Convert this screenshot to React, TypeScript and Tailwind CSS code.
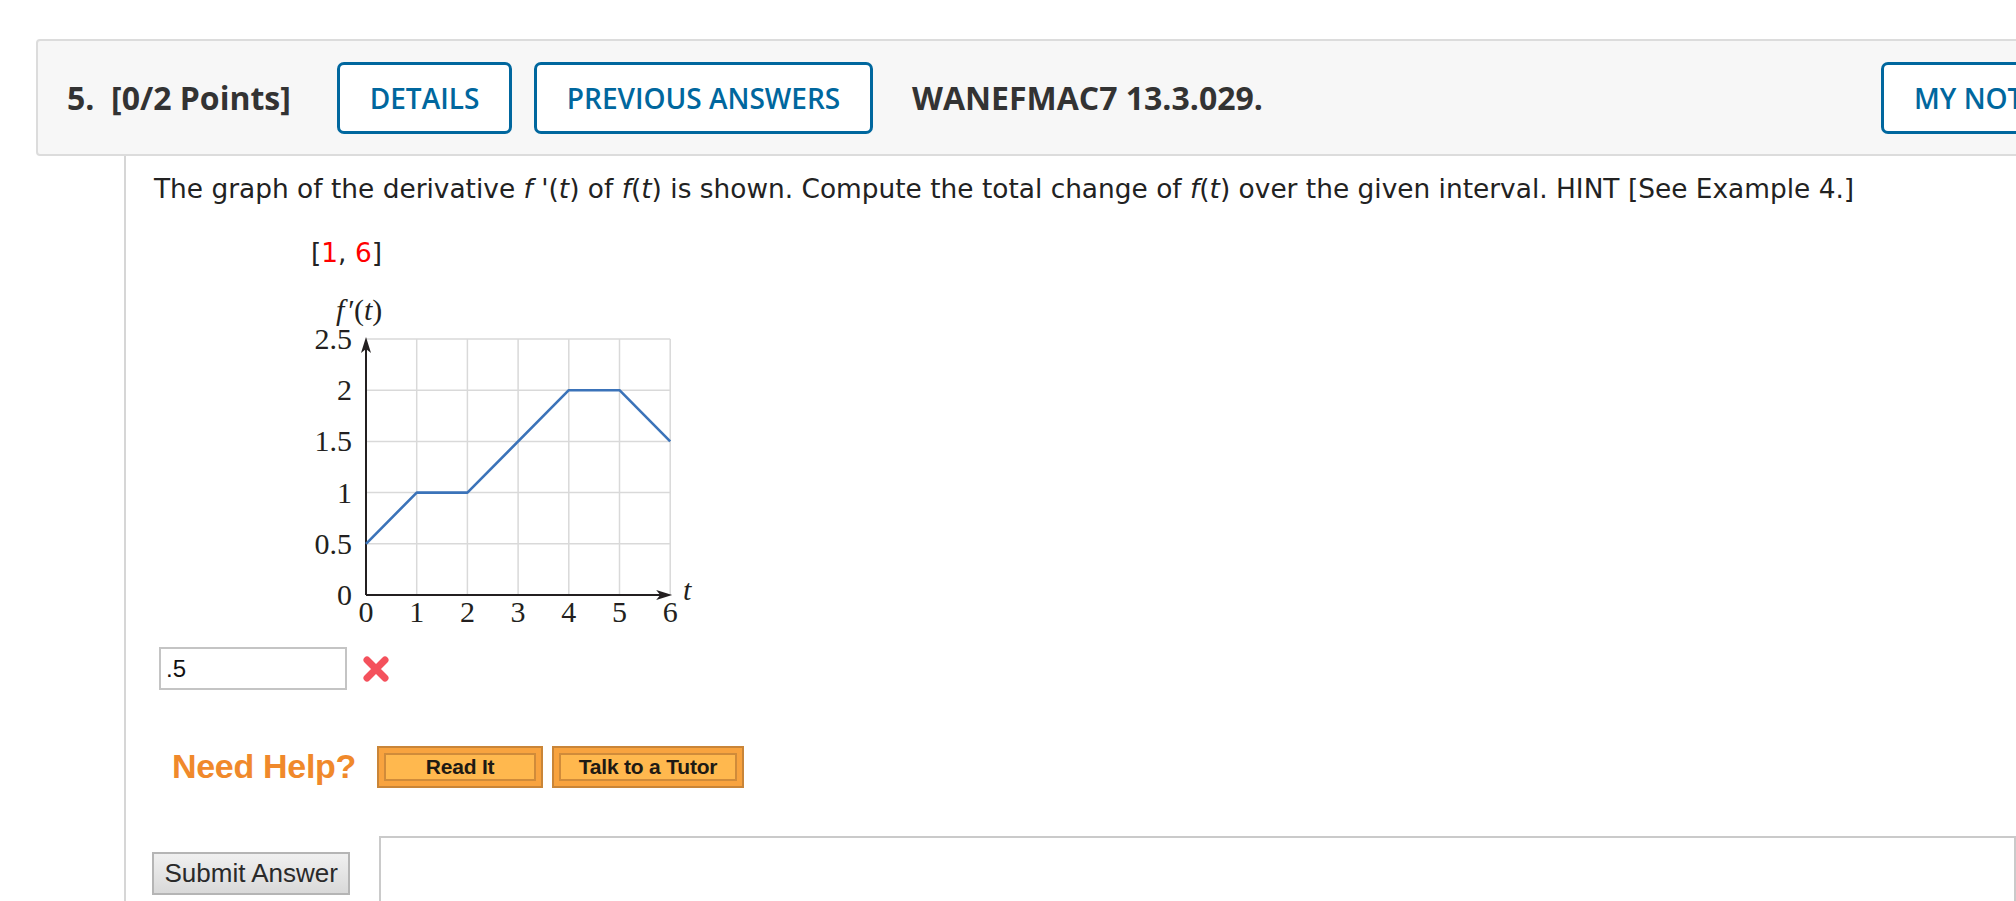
import React from "react";

const UX = 50.7;
const UY = 102.4;
const X0 = 66;
const Y0 = 303;

const px = (t: number) => X0 + t * UX;
const py = (v: number) => Y0 - v * UY;

const CURVE: [number, number][] = [
  [0, 0.5],
  [1, 1],
  [2, 1],
  [4, 2],
  [5, 2],
  [6, 1.5],
];

function DerivativeGraph() {
  const yTicks = [0.5, 1, 1.5, 2, 2.5];
  const yLabels = ["0", "0.5", "1", "1.5", "2", "2.5"];
  const top = py(2.5);
  const right = px(6);
  return (
    <svg width="410" height="336" viewBox="0 0 410 336" className="block">
      {/* grid */}
      {[1, 2, 3, 4, 5, 6].map((t) => (
        <line key={`v${t}`} x1={px(t)} y1={Y0} x2={px(t)} y2={top} stroke="#d9d9d9" strokeWidth="1.5" />
      ))}
      {yTicks.map((v) => (
        <line key={`h${v}`} x1={X0} y1={py(v)} x2={right} y2={py(v)} stroke="#d9d9d9" strokeWidth="1.5" />
      ))}

      {/* axes */}
      <line x1={X0} y1={Y0} x2={X0} y2={top + 10} stroke="#231f20" strokeWidth="2" />
      <polygon points={`${X0},${top - 2} ${X0 - 5},${top + 14} ${X0},${top + 10} ${X0 + 5},${top + 14}`} fill="#231f20" />
      <line x1={X0} y1={Y0} x2={right - 8} y2={Y0} stroke="#231f20" strokeWidth="2" />
      <polygon points={`${right + 2},${Y0} ${right - 14},${Y0 - 5} ${right - 10},${Y0} ${right - 14},${Y0 + 5}`} fill="#231f20" />

      {/* curve */}
      <polyline
        points={CURVE.map(([t, v]) => `${px(t)},${py(v)}`).join(" ")}
        fill="none"
        stroke="#3b73b9"
        strokeWidth="2.6"
        strokeLinejoin="round"
      />

      {/* labels */}
      <g fontFamily="'Liberation Serif', 'Times New Roman', serif" fontSize="30" fill="#231f20">
        {yLabels.map((l, i) => (
          <text key={l} x="52" y={py(i * 0.5) + 10} textAnchor="end">
            {l}
          </text>
        ))}
        {[0, 1, 2, 3, 4, 5, 6].map((t) => (
          <text key={`x${t}`} x={px(t)} y="330" textAnchor="middle">
            {t}
          </text>
        ))}
        <text x="36" y="28">
          <tspan fontStyle="italic">f</tspan>
          <tspan dx="4">′</tspan>
          <tspan dx="-1">(</tspan>
          <tspan fontStyle="italic">t</tspan>
          <tspan>)</tspan>
        </text>
        <text x="383" y="308" fontStyle="italic">
          t
        </text>
      </g>
    </svg>
  );
}

function OutlineButton({ label, width }: { label: string; width: string }) {
  return (
    <div
      className={`h-[72px] ${width} shrink-0 flex items-center justify-center border-[3px] border-[#00679e] rounded-[7px] bg-white text-[28px] font-semibold text-[#00679e] whitespace-nowrap overflow-hidden`}
    >
      {label}
    </div>
  );
}

function OrangeButton({ label, width }: { label: string; width: string }) {
  return (
    <div className={`h-[42px] ${width} p-[2px] bg-[#c98538]`}>
      <div className="h-full w-full bg-[#f8a33f] p-[5px]">
        <div className="h-full w-full border-2 border-[#d08b3a] bg-[#ffb84e] flex items-center justify-center text-[21px] font-bold text-[#1e1a14] leading-none tracking-[-0.2px]">
          {label}
        </div>
      </div>
    </div>
  );
}

const VERDANA = { fontFamily: "'DejaVu Sans', Verdana, sans-serif" };
const ARIAL = { fontFamily: "'Liberation Sans', Arial, sans-serif" };

export default function App() {
  return (
    <div className="w-full h-[901px] bg-white overflow-hidden">
      {/* question header */}
      <div className="pt-[39px] pl-[36px]">
        <div
          className="w-[2100px] h-[117px] flex items-center pl-[29px] border-2 border-[#dcdcdc] rounded-[4px] bg-[#f7f7f7] text-[#333]"
          style={{ fontFamily: "'Open Sans', sans-serif" }}
        >
          <div className="w-[270px] shrink-0 text-[32px] font-bold whitespace-nowrap">5.&nbsp; [0/2 Points]</div>
          <OutlineButton label="DETAILS" width="w-[175px]" />
          <div className="w-[22px] shrink-0" />
          <OutlineButton label="PREVIOUS ANSWERS" width="w-[339px]" />
          <div className="w-[1008px] shrink-0 pl-[39px] text-[32px] font-bold whitespace-nowrap">WANEFMAC7 13.3.029.</div>
          <div className="h-[72px] w-[250px] shrink-0 flex items-center pl-[30px] border-[3px] border-[#00679e] rounded-[7px] bg-white text-[28px] font-semibold text-[#00679e] whitespace-nowrap">
            MY NOTES
          </div>
        </div>
      </div>

      {/* question body */}
      <div className="ml-[124px] border-l-2 border-[#d6d6d6] h-[760px] pl-[28px]">
        <p className="pt-[15px] text-[26.4px] leading-[36px] text-[#222] whitespace-nowrap" style={VERDANA}>
          The graph of the derivative <i>f</i> '(<i>t</i>) of <i>f</i>(<i>t</i>) is shown. Compute the total change of{" "}
          <i>f</i>(<i>t</i>) over the given interval. HINT [See Example 4.]
        </p>
        <p className="mt-[28px] ml-[157px] text-[26.4px] leading-[36px] text-[#222]" style={VERDANA}>
          [<span className="text-[#ff0000]">1</span>, <span className="text-[#ff0000]">6</span>]
        </p>

        <div className="mt-[21px] ml-[146px]">
          <DerivativeGraph />
        </div>

        {/* answer */}
        <div className="mt-[19px] ml-[5px] flex items-center gap-[15px]">
          <div
            className="w-[188px] h-[43px] border-2 border-[#c4c4c4] bg-white flex items-center pl-[5px] text-[24px] text-[#111]"
            style={ARIAL}
          >
            .5
          </div>
          <svg width="28" height="28" viewBox="0 0 28 28">
            <path d="M5 5 L23 23 M23 5 L5 23" stroke="#f4515c" strokeWidth="7" strokeLinecap="round" />
          </svg>
        </div>

        {/* help */}
        <div className="mt-[51px] ml-[18px] flex items-center" style={ARIAL}>
          <span className="text-[34px] font-bold text-[#f0892b] tracking-[-0.3px] mr-[21px]">Need Help?</span>
          <OrangeButton label="Read It" width="w-[166px]" />
          <div className="w-[9px]" />
          <OrangeButton label="Talk to a Tutor" width="w-[192px]" />
        </div>

        {/* submit */}
        <div className="mt-[44px] flex items-start" style={ARIAL}>
          <div className="mt-[16px] -ml-[2px] w-[206px] h-[43px] border-2 border-[#b5b5b5] bg-gradient-to-b from-[#f0f0f0] to-[#d9d9d9] flex items-center justify-center text-[26px] text-[#2a2a2a]">
            Submit Answer
          </div>
          <div className="ml-[29px] w-[1700px] h-[100px] border-2 border-[#cacaca] bg-white" />
        </div>
      </div>
    </div>
  );
}
